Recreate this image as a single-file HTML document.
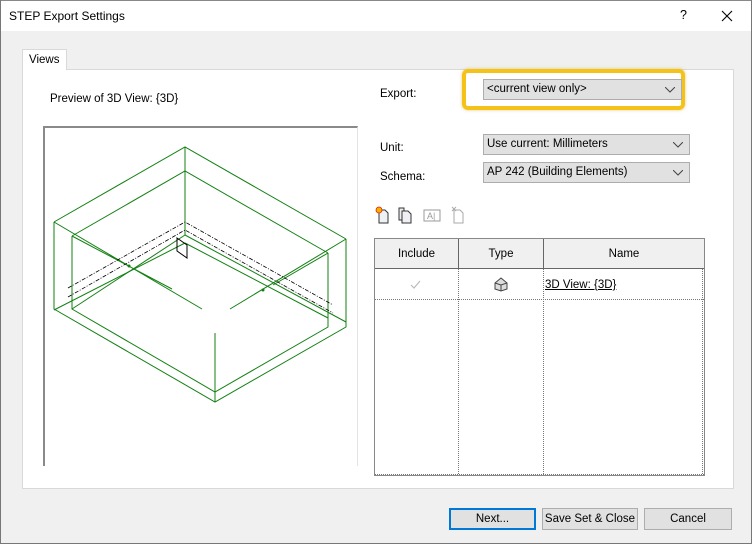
<!DOCTYPE html>
<html><head><meta charset="utf-8"><style>
*{margin:0;padding:0;box-sizing:border-box}
body{width:752px;height:544px;background:#f0f0f0;font-family:"Liberation Sans",sans-serif;font-size:11.5px;color:#000;position:relative;overflow:hidden}
.abs{position:absolute;white-space:nowrap}
.combo{position:absolute;background:#e1e1e1;border:1px solid #adadad;height:21px;padding:3px 0 0 3px;font-size:11.5px;white-space:nowrap}
.combo svg{position:absolute;right:6px;top:7px}
.btn{position:absolute;background:#e1e1e1;border:1px solid #adadad;height:22px;text-align:center;line-height:20px;font-size:11.5px;white-space:nowrap}
</style></head><body>
<div class="abs" style="left:0;top:0;width:752px;height:31px;background:#fff;border-top:1px solid #888"></div>
<div class="abs" style="left:9px;top:9px;font-size:12px">STEP Export Settings</div>
<div class="abs" style="left:680px;top:8px;font-size:12.5px">?</div>
<svg class="abs" style="left:721px;top:10px" width="12" height="12"><path d="M1 1L11 11M11 1L1 11" stroke="#000" stroke-width="1.1"/></svg>
<div class="abs" style="right:0;top:0;width:1px;height:544px;background:#777"></div>
<div class="abs" style="left:0;top:0;width:1px;height:544px;background:#777"></div>
<div class="abs" style="left:0;bottom:0;width:752px;height:1px;background:#777"></div>

<div class="abs" style="left:22px;top:69px;width:712px;height:420px;background:#fff;border:1px solid #d9d9d9"></div>
<div class="abs" style="left:22px;top:49px;width:45px;height:21px;background:#fff;border:1px solid #d9d9d9;border-bottom:none;padding:4px 0 0 6px">Views</div>

<div class="abs" style="left:50px;top:93px">Preview of 3D View: {3D}</div>
<div class="abs" style="left:43px;top:126px;width:315px;height:340px;background:#fff;border-top:2px solid #8a8a8a;border-left:2px solid #8a8a8a;border-right:1px solid #e3e3e3"></div>
<svg class="abs" style="left:0;top:0" width="370" height="470">
<g stroke="#128012" stroke-width="1" fill="none">
<path d="M54 222L185 147L346 239M54 222V309L215 402L346 327V239"/>
<path d="M185 147V235"/>
<path d="M72 236L185 171L328 253M72 236V309L215 392L328 327V253"/>
<path d="M215 333V402"/>
<path d="M185 235L72 309M185 235L346 322"/>
<path d="M185 243L54 310M185 243L328 318"/>
<path d="M54 222L202 309M72 236L172 289"/>
<path d="M346 239L230 309M328 253L273 285"/>
</g>
<g fill="#128012"><circle cx="129" cy="266" r="1.5"/><circle cx="263" cy="290" r="1.5"/></g>
<g stroke="#000" stroke-width="0.8" fill="none" stroke-dasharray="4 1.5 1 1.5">
<path d="M68 288L185 222L333 305"/>
<path d="M68 297L185 230L333 313"/>
</g>
<path d="M177 238L187 245L187 258L177 251Z" stroke="#000" fill="none"/>
</svg>

<div class="abs" style="left:380px;top:88px">Export:</div>
<div class="abs" style="left:462px;top:69px;width:223px;height:41px;border:4px solid #f5c21a;border-radius:6px;box-shadow:0 0 3px rgba(200,160,0,.5)"></div>
<div class="combo" style="left:483px;top:79px;width:199px">&lt;current view only&gt;<svg width="10" height="6"><path d="M0 0L5 5L10 0" stroke="#444" fill="none"/></svg></div>

<div class="abs" style="left:380px;top:142px">Unit:</div>
<div class="combo" style="left:483px;top:134px;width:207px">Use current: Millimeters<svg width="10" height="6"><path d="M0 0L5 5L10 0" stroke="#444" fill="none"/></svg></div>
<div class="abs" style="left:380px;top:171px">Schema:</div>
<div class="combo" style="left:483px;top:162px;width:207px">AP 242 (Building Elements)<svg width="10" height="6"><path d="M0 0L5 5L10 0" stroke="#444" fill="none"/></svg></div>

<svg class="abs" style="left:374px;top:205px" width="100" height="20">
<path d="M5 5h6l3 3v10H5Z" fill="#eef0f4" stroke="#333"/><circle cx="5" cy="5" r="3" fill="#f5b000" stroke="#e02000" stroke-width="0.8"/>
<path d="M25 3h5v12h-5Z" fill="#eee" stroke="#333"/><path d="M28 6h6l3 3v9h-9Z" fill="#eef0f4" stroke="#333"/>
<rect x="50" y="5" width="16" height="11" fill="none" stroke="#999"/><text x="53" y="14" font-size="9" fill="#999" font-family="Liberation Sans">A|</text>
<path d="M80 5h6l3 3v10h-9Z" fill="#fff" stroke="#aaa"/><path d="M78 2l4 4M82 2l-4 4" stroke="#aaa"/>
</svg>

<div class="abs" style="left:374px;top:238px;width:331px;height:238px;border:1px solid #888;background:#fff"></div>
<div class="abs" style="left:375px;top:239px;width:329px;height:30px;background:#f0f0f0;border-bottom:1px solid #666"></div>
<div class="abs" style="left:458px;top:239px;width:1px;height:30px;background:#666"></div>
<div class="abs" style="left:543px;top:239px;width:1px;height:30px;background:#666"></div>
<div class="abs" style="left:375px;top:248px;width:83px;text-align:center">Include</div>
<div class="abs" style="left:459px;top:248px;width:84px;text-align:center">Type</div>
<div class="abs" style="left:544px;top:248px;width:160px;text-align:center">Name</div>
<div class="abs" style="left:458px;top:269px;height:205px;border-left:1px dotted #777"></div>
<div class="abs" style="left:543px;top:269px;height:205px;border-left:1px dotted #777"></div>
<div class="abs" style="left:375px;top:299px;width:329px;border-top:1px dotted #777"></div>
<div class="abs" style="left:375px;top:474px;width:329px;border-top:1px dotted #777"></div>
<div class="abs" style="left:702px;top:269px;height:205px;border-left:1px dotted #777"></div>
<svg class="abs" style="left:409px;top:278px" width="14" height="14"><path d="M2 7l3 3l6-7" stroke="#bbb" fill="none" stroke-width="1.2"/></svg>
<svg class="abs" style="left:493px;top:276px" width="16" height="16"><path d="M2 7L8 2L14 7V13L8 15L2 13Z" fill="#ddd" stroke="#444"/><path d="M2 7L8 9L14 7M8 9V15" stroke="#444" fill="none"/></svg>
<div class="abs" style="left:545px;top:279px;text-decoration:underline">3D View: {3D}</div>

<div class="btn" style="left:449px;top:508px;width:87px;border:2px solid #0078d7;line-height:18px">Next...</div>
<div class="btn" style="left:542px;top:508px;width:96px">Save Set &amp; Close</div>
<div class="btn" style="left:644px;top:508px;width:88px">Cancel</div>
</body></html>
